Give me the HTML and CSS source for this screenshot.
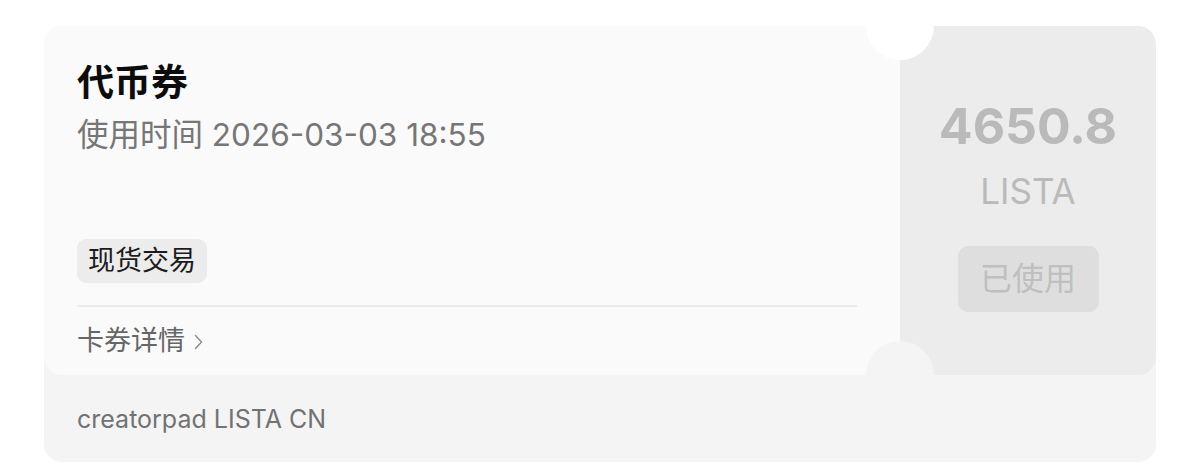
FILE: index.html
```html
<!DOCTYPE html>
<html lang="zh">
<head>
<meta charset="utf-8">
<link rel="stylesheet" href="styles.css">
</head>
<body>
<div class="card">
  <div class="ticket">
    <div class="main">
      <div class="title">代币券</div>
      <div class="subtitle">使用时间 2026-03-03 18:55</div>
      <div class="tag">现货交易</div>
      <div class="divider"></div>
      <div class="detail">卡券详情<svg class="chev" viewBox="0 0 12 18" width="12" height="18"><path d="M3.5 2.5 L9.5 9 L3.5 15.5" fill="none" stroke="#8c8c8c" stroke-width="1.4" stroke-linecap="round" stroke-linejoin="round"/></svg></div>
    </div>
    <div class="side">
      <div class="amount">4650.8</div>
      <div class="unit">LISTA</div>
      <div class="used">已使用</div>
    </div>
  </div>
  <div class="footer">creatorpad LISTA CN</div>
  <div class="notch notch-top"></div>
  <div class="notch notch-bottom"></div>
</div>
</body>
</html>
```

FILE: styles.css
```css
html, body {
  margin: 0;
  padding: 0;
  background: #ffffff;
}
body {
  font-family: Inter, "Noto Sans CJK SC", sans-serif;
  width: 1200px;
  height: 465px;
  overflow: hidden;
}
.card {
  position: relative;
  margin: 26px 0 0 44px;
  width: 1112px;
  height: 436px;
  background: #f4f4f4;
  border-radius: 18px;
  overflow: hidden;
}
.ticket {
  display: flex;
  height: 349px;
}
.main {
  width: 856px;
  box-sizing: border-box;
  padding: 34px 43px 0 33px;
  background: #fafafa;
  border-radius: 18px 0 0 18px;
  display: flex;
  flex-direction: column;
  align-items: flex-start;
}
.title {
  font-size: 37px;
  line-height: 46px;
  font-weight: 700;
  color: #0c0c0c;
}
.subtitle {
  margin-top: 9px;
  font-size: 31.5px;
  line-height: 40px;
  color: #767676;
}
.tag {
  margin-top: 84px;
  height: 44px;
  box-sizing: border-box;
  padding: 0 11px;
  background: #ececec;
  border-radius: 9px;
  font-size: 27px;
  line-height: 44px;
  color: #1c1c1c;
}
.divider {
  margin-top: 22px;
  align-self: stretch;
  height: 2px;
  background: #ececec;
}
.detail {
  margin-top: 16px;
  font-size: 27px;
  line-height: 36px;
  color: #666666;
  display: flex;
  align-items: center;
}
.chev {
  margin-left: 7px;
  margin-top: 2px;
}
.side {
  width: 256px;
  background: #ececec;
  border-radius: 0 18px 18px 0;
  display: flex;
  flex-direction: column;
  align-items: center;
  padding-top: 75px;
  box-sizing: border-box;
}
.amount {
  font-size: 50px;
  line-height: 50px;
  font-weight: 700;
  color: #bababa;
}
.unit {
  margin-top: 19px;
  font-size: 35px;
  line-height: 42px;
  color: #bababa;
}
.used {
  margin-top: 34px;
  width: 141px;
  height: 66px;
  border-radius: 10px;
  background: #dedede;
  color: #bfbfbf;
  font-size: 32px;
  line-height: 66px;
  text-align: center;
}
.footer {
  box-sizing: border-box;
  height: 87px;
  padding-left: 33px;
  display: flex;
  align-items: center;
  font-size: 25px;
  color: #727272;
}
.notch {
  position: absolute;
  left: 822px;
  width: 68px;
  height: 68px;
  border-radius: 50%;
}
.notch-top {
  top: -34px;
  background: #ffffff;
}
.notch-bottom {
  top: 315px;
  background: #f4f4f4;
}
```
